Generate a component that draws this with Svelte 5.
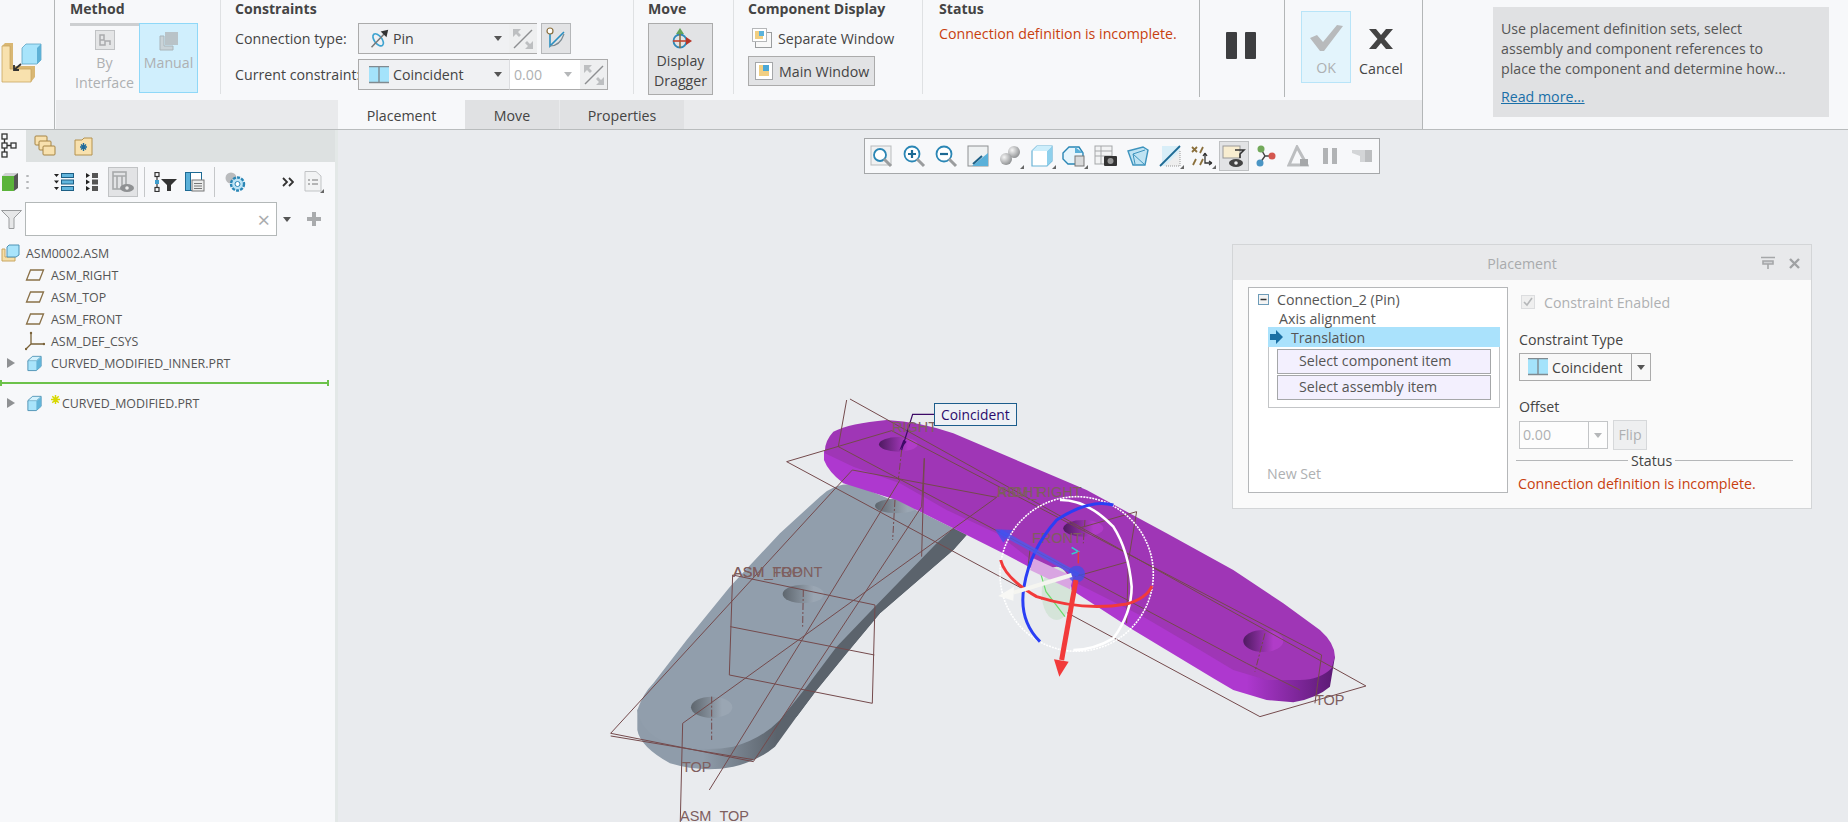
<script>
  const treeItems = [
    { label: 'ASM_RIGHT', kind: 'plane' },
    { label: 'ASM_TOP', kind: 'plane' },
    { label: 'ASM_FRONT', kind: 'plane' },
    { label: 'ASM_DEF_CSYS', kind: 'csys' }
  ];
</script>

{#snippet cube(size)}
  <svg width={size} height={size} viewBox="0 0 18 18">
    <path d="M2 6 L7 1.5 H16 V12 L11 16.5 H2 Z" fill="#a9e4fb" stroke="#4f93b5" stroke-width="1"/>
    <path d="M11 6.5 L16 2 V12 L11 16.5 Z" fill="#62b4d8"/>
    <path d="M2 6 L7 1.5 H16 L11 6 Z" fill="#d4f2fd" stroke="#4f93b5" stroke-width=".6"/>
  </svg>
{/snippet}

{#snippet scaleIcon()}
  <svg width="24" height="24" viewBox="0 0 24 24">
    <path d="M2 2 H10 L7 5 L10 8 L8 10 L5 7 L2 10 Z" fill="#bdbfc1"/>
    <path d="M22 22 H14 L17 19 L14 16 L16 14 L19 17 L22 14 Z" fill="#bdbfc1"/>
    <path d="M21 3 L3 21" stroke="#8d8f91" stroke-width="1.5"/>
  </svg>
{/snippet}

{#snippet coincidentIcon()}
  <svg width="20" height="18" viewBox="0 0 20 18">
    <rect x="0" y="1" width="20" height="15" fill="#a4e3fb"/>
    <path d="M0 0.5 H20 M0 16.5 H20 M10 1 V16" stroke="#808a90" stroke-width="1.4"/>
  </svg>
{/snippet}

<div class="page">
  <header class="ribbon">
    <div class="feature">
      <svg width="42" height="40" viewBox="0 0 42 40">
        <path d="M1 3 L4 0 H12 V23 H34 V34 L30 39 H1 Z" fill="#d9b773"/>
        <path d="M1 3 H9 V26 H30 V39 H1 Z" fill="#f8e1ae" stroke="#c9a661" stroke-width=".8"/>
        <path d="M21 5 L25 1 H40 V17 L36 21 H21 Z" fill="#a8e4fb" stroke="#5ea3c4" stroke-width=".8"/>
        <path d="M36 5 L40 1 V17 L36 21 Z" fill="#5eb1d6"/>
        <path d="M20 21 L13 27 M13 22 V27 H18" stroke="#333" stroke-width="1.8" fill="none"/>
      </svg>
    </div>
    <div class="ribbon-main">
      <div class="groups">
        <section class="group method">
          <h3>Method</h3>
          <div class="method-row">
            <div class="big by-interface">
              <svg width="20" height="20" viewBox="0 0 20 20">
                <rect x=".5" y=".5" width="19" height="19" fill="#e4e5e6" stroke="#c0c2c4"/>
                <path d="M5 5 H9 V10 H5 Z M5 10 V15 H10 V11 H15 V15" fill="none" stroke="#a9abad" stroke-width="1.5"/>
              </svg>
              <span>By</span><span>Interface</span>
            </div>
            <div class="big manual">
              <svg width="20" height="20" viewBox="0 0 20 20">
                <path d="M1 5 H5 V15 H14 V19 H1 Z" fill="#c9d3d8" stroke="#aab5ba"/>
                <rect x="6" y="1" width="13" height="13" fill="#b9c3c8"/>
              </svg>
              <span>Manual</span>
            </div>
          </div>
        </section>

        <section class="group constraints">
          <h3>Constraints</h3>
          <div class="c-row">
            <span class="c-label">Connection type:</span>
            <div class="combo">
              <svg width="20" height="22" viewBox="0 0 24 24">
                <ellipse cx="11" cy="13" rx="4.500" ry="8.500" transform="rotate(-38 11 13)" fill="none" stroke="#3ea3d0" stroke-width="2"/>
                <path d="M3 22 L19 5" stroke="#777" stroke-width="1.800"/>
                <path d="M23 1 L14 3 L21 10 Z" fill="#333"/>
              </svg>
              <span class="combo-text">Pin</span>
              <i class="caret"></i>
            </div>
            <div class="mini">{@render scaleIcon()}</div>
            <div class="mini pressed">
              <svg width="26" height="26" viewBox="0 0 26 26">
                <path d="M7 5 V20 L21 6" fill="none" stroke="#2b8fc0" stroke-width="1.6"/>
                <path d="M7 20 Q17 20 21 8" fill="none" stroke="#7b8a92" stroke-width="1.2"/>
                <circle cx="7" cy="5" r="3" fill="#fff" stroke="#8a6f3c" stroke-width="1.2"/>
              </svg>
            </div>
          </div>
          <div class="c-row second">
            <span class="c-label">Current constraint:</span>
            <div class="combo">
              {@render coincidentIcon()}
              <span class="combo-text">Coincident</span>
              <i class="caret"></i>
            </div>
            <div class="num-field">
              <span class="num">0.00</span>
              <i class="caret light"></i>
            </div>
            <div class="mini last">{@render scaleIcon()}</div>
          </div>
        </section>

        <section class="group move">
          <h3>Move</h3>
          <div class="dragger">
            <svg width="24" height="24" viewBox="0 0 24 24">
              <circle cx="11" cy="14" r="6.5" fill="none" stroke="#2f88b8" stroke-width="1.8"/>
              <path d="M11 5 V21" stroke="#8d6f43" stroke-width="1.6"/>
              <path d="M4 14 H18" stroke="#c2452f" stroke-width="1.6"/>
              <path d="M11 1 L7 7 H15 Z" fill="#63a35c"/>
              <path d="M23 14 L17 10 V18 Z" fill="#b5352a"/>
            </svg>
            <span>Display</span><span>Dragger</span>
          </div>
        </section>

        <section class="group component">
          <h3>Component Display</h3>
          <div class="cd-btn">
            <svg width="20" height="20" viewBox="0 0 20 20">
              <rect x="3.5" y="4.5" width="16" height="15" fill="#f8f8f8" stroke="#9a9c9e"/>
              <rect x=".5" y=".5" width="14" height="13" fill="#fff" stroke="#b5b7b9"/>
              <rect x="3" y="3" width="8" height="8" fill="#f1cf82"/>
              <rect x="7" y="3" width="5" height="5" fill="#5bb3dc"/>
            </svg>
            <span>Separate Window</span>
          </div>
          <div class="cd-btn active">
            <svg width="18" height="18" viewBox="0 0 18 18">
              <rect x=".5" y=".5" width="17" height="17" fill="#fff" stroke="#a5a7a9"/>
              <rect x="4" y="3" width="10" height="11" fill="#f1cf82"/>
              <rect x="8" y="3" width="6" height="6" fill="#4aa7d6"/>
            </svg>
            <span>Main Window</span>
          </div>
        </section>

        <section class="group status">
          <h3>Status</h3>
          <p class="error">Connection definition is incomplete.</p>
        </section>

        <section class="group pause">
          <i class="bar"></i><i class="bar"></i>
        </section>

        <section class="group actions">
          <div class="act ok">
            <svg width="34" height="28" viewBox="0 0 34 28">
              <path d="M1 14 L8 11 L14 18 L28 1 L34 2 L15 27 H11 Z" fill="#b8babc"/>
            </svg>
            <span>OK</span>
          </div>
          <div class="act cancel">
            <svg width="26" height="22" viewBox="0 0 26 22">
              <path d="M1 1 H8 L13 7 L18 1 H25 L16.5 11 L25 21 H18 L13 15 L8 21 H1 L9.5 11 Z" fill="#444"/>
            </svg>
            <span>Cancel</span>
          </div>
        </section>
      </div>
      <nav class="tabstrip">
        <span class="tab current">Placement</span>
        <span class="tab tab-move">Move</span>
        <span class="tab tab-props">Properties</span>
      </nav>
    </div>
    <aside class="help">
      <div class="help-box">
        <p>Use placement definition sets, select<br/>assembly and component references to<br/>place the component and determine how...</p>
        <a href="#more">Read more...</a>
      </div>
    </aside>
  </header>

  <div class="workspace">
    <aside class="sidebar">
      <div class="side-tabs">
        <div class="side-tab on">
          <svg width="16" height="26" viewBox="0 0 16 26">
            <g fill="none" stroke="#333" stroke-width="1.3">
              <rect x="1" y="1" width="5" height="5"/><rect x="1" y="10" width="5" height="5"/><rect x="1" y="19" width="5" height="5"/><rect x="10" y="10" width="5" height="5"/>
              <path d="M3.5 6 V10 M3.5 15 V19 M6 12.5 H10"/>
            </g>
          </svg>
        </div>
        <div class="side-tab">
          <svg width="22" height="22" viewBox="0 0 22 22">
            <g fill="#f8e1ae" stroke="#a58445" stroke-width="1">
              <rect x="1" y="1" width="12" height="9" rx="1"/><rect x="5" y="6" width="12" height="9" rx="1"/><rect x="9" y="11" width="12" height="9" rx="1"/>
            </g>
          </svg>
        </div>
        <div class="side-tab folder">
          <svg width="20" height="20" viewBox="0 0 20 20">
            <path d="M1 4 H8 L10 2 H18 V19 H1 Z" fill="#f8e1ae" stroke="#b4924f"/>
            <path d="M9.5 7 V15 M6 11 H13 M7 8.5 L12 13.5 M12 8.5 L7 13.5" stroke="#1f6a9a" stroke-width="1.4"/>
          </svg>
        </div>
      </div>

      <div class="side-tools">
        <svg width="16" height="18" viewBox="0 0 16 18">
          <rect y="3" width="12" height="15" fill="#5bb43a"/><path d="M0 3 L3 0 H16 L12 3 Z" fill="#d0d2d4"/><path d="M12 3 L16 0 V15 L12 18 Z" fill="#555"/>
        </svg>
        <i class="grip"></i>
        <svg width="20" height="18" viewBox="0 0 20 18">
          <g fill="#62b5dc" stroke="#1d5f85"><rect x="7.5" y=".5" width="12" height="4"/><rect x="7.5" y="7" width="12" height="4"/><rect x="7.5" y="13.5" width="12" height="4"/></g>
          <path d="M0 1 H5 L2.500 4 Z M0 7.500 H5 L2.500 10.500 Z M0 14 H5 L2.500 17 Z" fill="#222"/>
        </svg>
        <svg width="12" height="18" viewBox="0 0 12 18">
          <g fill="#555"><rect x="6" width="6" height="5"/><rect x="6" y="6.500" width="6" height="5"/><rect x="6" y="13" width="6" height="5"/></g>
          <path d="M0 0 L4 2.500 L0 5 Z M0 6.500 L4 9 L0 11.500 Z M0 13 L4 15.500 L0 18 Z" fill="#222"/>
        </svg>
        <div class="press">
          <svg width="22" height="22" viewBox="0 0 22 22">
            <g fill="none" stroke="#a7a9ab" stroke-width="1.6"><rect x="1" y="1" width="13" height="17"/><path d="M1 5 H14 M5 5 V18 M10 5 V18"/></g>
            <ellipse cx="15" cy="17" rx="7" ry="4" fill="#8f9193"/><circle cx="15" cy="17" r="1.800" fill="#eee"/>
          </svg>
        </div>
        <i class="vsep"></i>
        <svg width="24" height="20" viewBox="0 0 24 20">
          <g fill="none" stroke="#333" stroke-width="1.200"><rect x="1" y=".5" width="4" height="4"/><rect x="1" y="15.500" width="4" height="4"/><path d="M3 4.500 V8 M3 12 V15.500"/></g>
          <rect x="1" y="8" width="4" height="4" fill="#3f9ccb"/><path d="M7 7 H23 L17 13 V19 H13 V13 Z" fill="#333"/>
        </svg>
        <svg width="20" height="20" viewBox="0 0 20 20">
          <rect x=".5" y=".5" width="16" height="18" fill="#fff" stroke="#1d6a94"/><rect x=".5" y=".5" width="5" height="18" fill="#5ab0d9" stroke="#1d6a94"/>
          <rect x="7" y="8" width="12" height="11" fill="#eceded" stroke="#777"/><path d="M9 11.500 H17 M9 14 H17 M9 16.500 H17" stroke="#777"/>
        </svg>
        <i class="vsep"></i>
        <svg width="22" height="22" viewBox="0 0 22 22">
          <circle cx="7" cy="7" r="5.500" fill="#b9bbbd"/>
          <circle cx="13.500" cy="13" r="6.500" fill="#bde4f6" stroke="#2a86b5" stroke-width="2.400" stroke-dasharray="3 1.200"/>
          <circle cx="13.500" cy="13" r="2.500" fill="#fff" stroke="#2a86b5"/>
        </svg>
        <svg class="chev" width="12" height="10" viewBox="0 0 12 10"><path d="M1 1 L5 5 L1 9 M7 1 L11 5 L7 9" fill="none" stroke="#333" stroke-width="1.800"/></svg>
        <svg width="20" height="22" viewBox="0 0 20 22">
          <path d="M1 .5 H12 L17 5 V20 H1 Z" fill="#f2f3f4" stroke="#c1c3c5"/><path d="M4 9 H6 M8 9 H14 M4 13 H6 M8 13 H14" stroke="#777"/>
          <path d="M20 18 V22 H16 Z" fill="#666"/>
        </svg>
      </div>

      <div class="side-filter">
        <svg width="21" height="19" viewBox="0 0 21 19">
          <path d="M.5 .5 H20.500 L13 8 V18.500 H8 V8 Z" fill="#e6e7e8" stroke="#9a9c9e"/>
        </svg>
        <div class="filter-input"><span class="clear">×</span></div>
        <i class="caret filter-caret"></i>
        <span class="plus"></span>
      </div>

      <ul class="tree">
        <li class="root">
          <svg width="19" height="18" viewBox="0 0 19 18">
            <path d="M1 5 H4 V13 H14 V17 H1 Z" fill="#f6dfa9" stroke="#c9a661"/><path d="M6 3 L8 1 H18 V11 L15 13 H6 Z" fill="#a9e4fb" stroke="#4f93b5"/>
          </svg>
          <span>ASM0002.ASM</span>
        </li>
        {#each treeItems as item}
          <li class="feat">
            {#if item.kind === 'plane'}
              <svg width="19" height="12" viewBox="0 0 19 12">
                <path d="M5 1 H18 L14 11 H1 Z" fill="none" stroke="#8a7148" stroke-width="1.300"/>
              </svg>
            {:else}
              <svg width="20" height="20" viewBox="0 0 20 20">
                <path d="M6 2 V13 L1 18 M6 13 H19" fill="none" stroke="#7a6238" stroke-width="1.300"/>
                <circle cx="6" cy="2" r="1.200" fill="#7a6238"/><circle cx="19" cy="13" r="1.200" fill="#7a6238"/><circle cx="1" cy="18" r="1.200" fill="#7a6238"/>
              </svg>
            {/if}
            <span>{item.label}</span>
          </li>
        {/each}
        <li class="part">
          <i class="arrow"></i>
          {@render cube(17)}
          <span class="name">CURVED_MODIFIED_INNER.PRT</span>
        </li>
        <li class="insert"><i class="insert-line"></i></li>
        <li class="part">
          <i class="arrow"></i>
          {@render cube(17)}
          <svg class="star" width="9" height="9" viewBox="0 0 9 9">
            <path d="M4.500 0 V9 M0 4.500 H9 M1.300 1.300 L7.700 7.700 M7.700 1.300 L1.300 7.700" stroke="#d8d800" stroke-width="1.500"/>
          </svg>
          <span class="star-name">CURVED_MODIFIED.PRT</span>
        </li>
      </ul>
    </aside>

    <main class="viewport">
      <svg class="model" width="800" height="432" viewBox="0 0 800 432">
        <defs>
          <linearGradient id="purpleEnd" gradientUnits="userSpaceOnUse" x1="1880" y1="0" x2="2130" y2="0">
            <stop offset="0" stop-color="#ae38cf"/><stop offset="1" stop-color="#5f1b78"/>
          </linearGradient>
          <linearGradient id="greySide" gradientUnits="userSpaceOnUse" x1="250" y1="0" x2="470" y2="0">
            <stop offset="0" stop-color="#8f9caa"/><stop offset="1" stop-color="#5b636c"/>
          </linearGradient>
          <linearGradient id="holeP" x1="0" x2="1"><stop offset="0" stop-color="#4e1a60"/><stop offset=".75" stop-color="#b03cc8"/></linearGradient>
          <linearGradient id="holeG" x1="0" x2="1"><stop offset="0" stop-color="#5e666e"/><stop offset=".75" stop-color="#9aa6b3"/></linearGradient>
        </defs>

        <!-- traced at 3x, origin at page 620,400 -->
        <g transform="translate(40 10) scale(.3333)">
          <path d="M52 930 L52 990 Q60 1040 150 1090 Q250 1120 340 1100 Q410 1085 465 1040 L530 950 L590 870 L680 760 L780 640 L1000 450 L1040 405 L1000 385 Z" fill="url(#greySide)"/>
          <path d="M1000 385 L950 430 L770 615 L650 740 L560 860 L490 950 L530 950 L590 870 L680 760 L780 640 L1000 450 L1040 405 Z" fill="#5b636c"/>
          <path d="M52 930 Q70 880 100 850 L200 720 L330 560 L480 400 L600 290 Q640 250 700 252 L900 335 L1000 385 L950 430 L770 615 L650 740 L560 860 L480 960 Q420 1020 340 1040 Q240 1060 130 1025 Q60 990 52 930 Z" fill="#919eac"/>
          <ellipse cx="830" cy="318" rx="65" ry="22" fill="url(#holeG)"/>
          <ellipse cx="550" cy="582" rx="62" ry="28" fill="url(#holeG)"/>
          <ellipse cx="275" cy="922" rx="62" ry="32" fill="url(#holeG)"/>

          <path d="M612 150 L612 180 Q625 215 670 250 L830 300 L1000 385 L1160 465 L1340 560 L1540 690 L1780 835 L1840 870 L1940 900 L2020 907 Q2090 895 2130 860 L2145 770 L1600 500 L700 150 Z" fill="url(#purpleEnd)"/>
          <path d="M615 160 Q612 125 640 95 Q690 70 800 60 Q900 65 1000 100 L1400 270 L1640 400 L1840 510 L1990 610 L2100 690 Q2145 730 2145 770 L2135 805 Q2100 840 2040 840 L1940 840 L1840 810 L1740 750 L1570 650 L1370 550 L1240 485 L1130 400 L980 330 L840 250 L700 200 Z" fill="#9f36b6"/>
          <ellipse cx="835" cy="133" rx="58" ry="22" fill="url(#holeP)"/>
          <ellipse cx="1390" cy="385" rx="60" ry="25" fill="url(#holeP)"/>
          <ellipse cx="1930" cy="723" rx="60" ry="33" fill="url(#holeP)"/>

          <g class="datum">
            <path d="M690 -3 L2238 858 L1920 950 L500 185 L815 92 L2105 765 L2085 910"/>
            <path d="M680 0 L655 140 L1880 790 L2040 870"/>
            <path d="M697 210 L1130 292 L188 970 L180 1300"/>
            <path d="M697 210 L-28 1000 L400 1085 L905 320 L913 175 L905 470"/>
            <path d="M-28 1008 L400 1079 M268 1170 L540 730 L840 240"/>
            <path d="M338 525 L765 615 L757 910 L328 825 Z M331 680 L763 765"/>
            <path d="M1550 335 L1525 485 L1520 670 M1375 385 L1550 335 M1365 530 L1525 485"/>
            <path d="M1230 450 L1222 520"/>
          </g>
          <g class="axis">
            <path d="M845 150 L835 240 M825 300 L818 420 M550 570 L548 680 M275 890 V1020 M1935 700 L1905 815 M1395 360 L1390 430"/>
          </g>
          <path d="M943 43 H878 L845 150" fill="none" stroke="#3d0a66" stroke-width="1.200"/>
          <path d="M838 152 L850 120 L860 125 Z" fill="#3d0a66"/>
        </g>

        <text class="lbl" x="312" y="42">RIGHT</text>
        <text class="lbl" x="417" y="107">ASM_RIGHT</text>
        <text class="lbl" x="417" y="107">RIGHT</text>
        <text class="lbl" x="452" y="153">FRONT</text>
        <text class="lbl" x="153" y="187">ASM_FRONT</text>
        <text class="lbl" x="153" y="187">ASM_TOP</text>
        <text class="lbl" x="735" y="315">TOP</text>
        <text class="lbl" x="102" y="382">TOP</text>
        <text class="lbl" x="100" y="431">ASM_TOP</text>

        <g transform="translate(370 80) scale(.3333)">
          <ellipse cx="320" cy="370" rx="45" ry="80" fill="#d5e4d9" stroke="none"/>
          <path d="M272 310 L288 365 L345 440" fill="none" stroke="#6bdc6b" stroke-width="1.200"/>
          <path d="M250 265 L370 320 L360 358 L240 300 Z" fill="#d9a5e2"/>
          <ellipse cx="380" cy="312" rx="230" ry="232" fill="none" stroke="#fff" stroke-width="1.600" stroke-dasharray="2 1"/>
          <path d="M330 90 Q410 88 490 170 Q535 240 545 350 Q545 430 490 505 Q430 540 370 540" fill="none" stroke="#fff" stroke-width="2.600"/>
          <path d="M490 105 Q420 85 320 150 Q240 240 222 350 Q205 450 270 515" fill="none" stroke="#2a3ff5" stroke-width="3"/>
          <path d="M152 270 Q165 325 260 380 Q400 425 530 402 Q590 385 606 348" fill="none" stroke="#f23a3a" stroke-width="3"/>
          <path class="hatched" d="M385 315 L150 185" stroke="#4a5cf0" stroke-width="5"/>
          <path class="hatched" d="M135 178 L188 180 L160 218 Z" fill="#3d50f0"/>
          <circle class="hatched" cx="380" cy="312" r="25" fill="#3d50e8"/>
          <path d="M365 315 L190 368" stroke="#f5f5f0" stroke-width="4"/>
          <path d="M145 378 L192 350 L190 392 Z" fill="#f8f8f5"/>
          <path d="M378 330 L335 570" stroke="#f23a3a" stroke-width="5"/>
          <path d="M312 568 L356 575 L328 620 Z" fill="#f23a3a"/>
          <path d="M365 232 L385 245 L365 252" fill="none" stroke="#33cfd0" stroke-width="1.500"/>
          <path d="M385 245 L385 280" stroke="#e8393a" stroke-width="1.500"/>
        </g>

        <rect x="354.500" y="13.500" width="82" height="22" fill="#eef1f5" stroke="#1c5d8c"/>
        <text class="callout" x="361" y="30">Coincident</text>
      </svg>

      <div class="view-tools">
        <div class="vt"><svg width="24" height="24" viewBox="0 0 24 24"><rect x="1" y="2" width="20" height="19" fill="#f0f1f2" stroke="#b9bbbd"/><circle cx="10" cy="11" r="6" fill="#fff" stroke="#2a86b5" stroke-width="1.800"/><path d="M14 15 L21 22" stroke="#9a9c9e" stroke-width="3"/></svg></div>
        <div class="vt"><svg width="24" height="24" viewBox="0 0 24 24"><circle cx="10" cy="10" r="7.500" fill="#fff" stroke="#2a86b5" stroke-width="1.800"/><path d="M10 6 V14 M6 10 H14" stroke="#1d6a94" stroke-width="2.200"/><path d="M15 15 L22 22" stroke="#9a9c9e" stroke-width="3"/></svg></div>
        <div class="vt"><svg width="24" height="24" viewBox="0 0 24 24"><circle cx="10" cy="10" r="7.500" fill="#fff" stroke="#2a86b5" stroke-width="1.800"/><path d="M6 10 H14" stroke="#1d6a94" stroke-width="2.200"/><path d="M15 15 L22 22" stroke="#9a9c9e" stroke-width="3"/></svg></div>
        <div class="vt"><svg width="22" height="22" viewBox="0 0 22 22"><rect x="1" y="1" width="20" height="20" fill="#eef1f2" stroke="#8d8f91"/><path d="M21 8 L5 21 H21 Z" fill="#5ab0d9"/><path d="M6 19 L15 11" stroke="#1d5f85" stroke-width="2"/></svg></div>
        <div class="vt more"><svg width="22" height="22" viewBox="0 0 22 22"><defs><radialGradient id="ball" cx=".35" cy=".35" r=".7"><stop offset="0" stop-color="#f5f5f5"/><stop offset="1" stop-color="#8d8f91"/></radialGradient></defs><circle cx="15" cy="7" r="6" fill="url(#ball)"/><circle cx="7" cy="14" r="6" fill="url(#ball)"/></svg></div>
        <div class="vt more"><svg width="22" height="22" viewBox="0 0 22 22"><path d="M1 6 L6 1 H21 V16 L16 21 H1 Z" fill="#fff" stroke="#6ab3d6" stroke-width="1.200"/><path d="M16 6 L21 1 V16 L16 21 Z" fill="#8fd0ec"/><path d="M1 6 H16 L21 1 H6 Z" fill="#cdeefb"/></svg></div>
        <div class="vt more"><svg width="24" height="22" viewBox="0 0 24 22"><path d="M1 8 L7 2 H17 L21 8 V14 L16 19 H6 L1 14 Z" fill="#e6f5fc" stroke="#2a86b5" stroke-width="1.400"/><path d="M13 2 L21 8 H13 Z" fill="#5ab0d9"/><rect x="13" y="11" width="9" height="10" fill="#d9dadb" stroke="#777"/></svg></div>
        <div class="vt"><svg width="24" height="22" viewBox="0 0 24 22"><rect x="1" y="1" width="17" height="18" fill="#f2f3f4" stroke="#a5a7a9"/><path d="M1 6 H18 M1 11 H18 M7 1 V19" stroke="#a5a7a9"/><rect x="10" y="11" width="13" height="10" rx="1" fill="#333"/><circle cx="16.500" cy="16" r="3" fill="#999"/></svg></div>
        <div class="vt"><svg width="22" height="22" viewBox="0 0 22 22"><path d="M1 6 L16 2 L21 5 L18 20 L6 20 Z" fill="#bfe3f3" stroke="#3d93bd" stroke-width="1.400"/><path d="M6 9 L18 5 M6 9 L8 19 M6 9 L18 20" stroke="#3d93bd"/></svg></div>
        <div class="vt more"><svg width="22" height="22" viewBox="0 0 22 22"><rect x="3" y="1" width="18" height="20" fill="#d8eef8"/><path d="M21 6 V21 H6" fill="#eee" stroke="#999" stroke-dasharray="1 1"/><path d="M1 21 L21 1" stroke="#1d6a94" stroke-width="1.800"/></svg></div>
        <div class="vt more"><svg width="22" height="22" viewBox="0 0 22 22"><g stroke="#8a6f3c" stroke-width="1.800" fill="none"><path d="M1 2 L6 7 M6 2 L1 7 M12 2 L9 8 M2 20 L5 14 M9 20 L12 14"/></g><path d="M14 8 V18 H21 M14 8 L12 11 M14 8 L16 11 M21 18 L18 16 M21 18 L18 20" stroke="#333" stroke-width="1.300" fill="none"/></svg></div>
        <div class="vt on"><svg width="24" height="24" viewBox="0 0 24 24"><rect x="1" y="2" width="17" height="12" fill="#f8edd0" stroke="#999"/><path d="M13 6 H22 L18 10 V14" fill="none" stroke="#333" stroke-width="1.600"/><ellipse cx="14" cy="19" rx="7" ry="4" fill="#444"/><circle cx="14" cy="19" r="1.800" fill="#eee"/></svg></div>
        <div class="vt"><svg width="20" height="22" viewBox="0 0 20 22"><path d="M5 4 L9 11 L17 11 M9 11 L4 18" stroke="#444" stroke-width="1.400" fill="none"/><circle cx="5" cy="4" r="3.500" fill="#72a95a"/><circle cx="16" cy="11" r="3.500" fill="#d4574f"/><circle cx="4" cy="18" r="3.500" fill="#4a95c4"/></svg></div>
        <div class="vt"><svg width="22" height="22" viewBox="0 0 22 22"><path d="M10 2 L20 20 H2 Z" fill="none" stroke="#bcbec0" stroke-width="3"/><rect x="13" y="14" width="8" height="7" fill="#a5a7a9"/></svg></div>
        <div class="vt"><svg width="16" height="18" viewBox="0 0 16 18"><rect x="1" y="1" width="5" height="16" fill="#b1b3b5"/><rect x="10" y="1" width="5" height="16" fill="#b1b3b5"/></svg></div>
        <div class="vt"><svg width="22" height="16" viewBox="0 0 22 16"><path d="M1 2 H21 V14 H9 L9 8 L1 5 Z" fill="#d3d5d7"/><path d="M14 2 H21 V14 H14 Z" fill="#bcbec0"/></svg></div>
      </div>

      <div class="dialog">
        <div class="dlg-title">
          <span>Placement</span>
          <svg class="pin" width="16" height="14" viewBox="0 0 16 14"><path d="M1 1.500 H15 M3 5 H13 V8 H3 Z M8 8 V13" fill="#d0d2d4" stroke="#a5a7a9" stroke-width="1.600"/></svg>
          <svg class="close" width="11" height="11" viewBox="0 0 11 11"><path d="M1 1 L10 10 M10 1 L1 10" stroke="#a0a2a4" stroke-width="2.400"/></svg>
        </div>
        <div class="dlg-body">
          <div class="sets">
            <div class="set-head">
              <svg width="11" height="11" viewBox="0 0 11 11"><rect x=".5" y=".5" width="10" height="10" fill="#f4f4f4" stroke="#6d9bb8"/><path d="M2.500 5.500 H8.500" stroke="#333" stroke-width="1.500"/></svg>
              <span>Connection_2 (Pin)</span>
            </div>
            <div class="set-axis">Axis alignment</div>
            <div class="set-current">
              <svg width="13" height="14" viewBox="0 0 13 14"><path d="M0 4 H6 V0 L13 7 L6 14 V10 H0 Z" fill="#1a6fa3"/></svg>
              <span>Translation</span>
            </div>
            <div class="ref-box">
              <div class="ref">Select component item</div>
              <div class="ref">Select assembly item</div>
            </div>
            <div class="new-set">New Set</div>
          </div>
          <div class="props">
            <div class="check-row">
              <span class="check">
                <svg width="14" height="14" viewBox="0 0 14 14"><path d="M3 7 L6 10 L11 3" fill="none" stroke="#b5b7b9" stroke-width="1.600"/></svg>
              </span>
              <span>Constraint Enabled</span>
            </div>
            <div class="prop-label type-label">Constraint Type</div>
            <div class="type-combo">
              <div class="type-main">{@render coincidentIcon()}<span>Coincident</span></div>
              <div class="type-drop"><i class="caret"></i></div>
            </div>
            <div class="prop-label offset-label">Offset</div>
            <div class="offset-row">
              <div class="offset">
                <span class="offset-val">0.00</span>
                <div class="offset-drop"><i class="caret light"></i></div>
              </div>
              <div class="flip">Flip</div>
            </div>
            <div class="status-line"><i></i><span>Status</span><i></i></div>
            <div class="error dlg-error">Connection definition is incomplete.</div>
          </div>
        </div>
      </div>
    </main>
  </div>
</div>

<style>
  :global(body) {
    margin: 0;
    background: #e9ebee;
    font-family: "Open Sans", "Noto Sans", sans-serif;
    color: #444;
    overflow: hidden;
  }
  .page {
    width: 1848px;
    height: 822px;
    display: flex;
    flex-direction: column;
    overflow: hidden;
    font-size: 14.2px;
  }
  i { display: block; }
  h3 {
    margin: 0;
    height: 23px;
    font-size: 14.1px;
    line-height: 17px;
    font-weight: 700;
    color: #444;
  }

  /* ribbon */
  .ribbon {
    display: flex;
    height: 130px;
    flex: none;
    box-sizing: border-box;
    background: #f7f8fa;
    border-bottom: 1px solid #b9bcbd;
  }
  .feature {
    width: 55px;
    flex: none;
    box-sizing: border-box;
    border-right: 1px solid #b3b6b7;
    padding: 43px 0 0 1px;
  }
  .ribbon-main {
    width: 1368px;
    flex: none;
    display: flex;
    flex-direction: column;
    border-right: 1px solid #b3b6b7;
    box-sizing: border-box;
  }
  .groups {
    display: flex;
    height: 100px;
    padding-left: 1px;
  }
  .group {
    box-sizing: border-box;
    height: 94px;
    padding-left: 14px;
    border-right: 1px solid #dfe1e3;
    flex: none;
  }
  .method { width: 165px; }
  .method-row { display: flex; }
  .big {
    box-sizing: border-box;
    height: 70px;
    display: flex;
    flex-direction: column;
    align-items: center;
    color: #aeb0b2;
    line-height: 20px;
  }
  .by-interface {
    width: 69px;
    border-top: 3px solid #cdcfd1;
    padding-top: 4px;
  }
  .by-interface svg { margin-bottom: 3px; }
  .manual {
    width: 59px;
    background: #d0effd;
    border: 1px solid #8fd8f8;
    padding-top: 7px;
  }
  .manual svg { margin-bottom: 2px; }
  .constraints { width: 413px; }
  .c-row {
    display: flex;
    align-items: stretch;
    height: 31px;
  }
  .c-row.second { margin-top: 5px; }
  .c-label {
    width: 123px;
    flex: none;
    line-height: 31px;
    white-space: nowrap;
  }
  .combo {
    box-sizing: border-box;
    width: 151px;
    flex: none;
    display: flex;
    align-items: center;
    padding: 0 7px 0 10px;
    background: #f0f1f3;
    border: 1px solid #ababab;
    border-right: none;
    gap: 4px;
  }
  .combo-text { flex: 1; }
  .caret {
    width: 0;
    height: 0;
    border-left: 4px solid transparent;
    border-right: 4px solid transparent;
    border-top: 5px solid #555;
  }
  .caret.light { border-top-color: #b5b7b9; }
  .mini {
    box-sizing: border-box;
    width: 28px;
    flex: none;
    display: flex;
    align-items: center;
    justify-content: center;
    background: #eeeff0;
    border-top: 1px solid #ababab;
    border-bottom: 1px solid #ababab;
  }
  .mini.pressed {
    width: 30px;
    margin-left: 4px;
    background: #e2e3e5;
    border: 1px solid #b5b7b9;
  }
  .mini.last { border-right: 1px solid #ababab; }
  .num-field {
    box-sizing: border-box;
    width: 71px;
    flex: none;
    display: flex;
    align-items: center;
    background: #fff;
    border-top: 1px solid #ababab;
    border-bottom: 1px solid #ababab;
    border-left: 1px solid #dcdde0;
  }
  .num { width: 54px; padding-left: 4px; box-sizing: border-box; color: #aeb0b2; }
  .move { width: 100px; }
  .dragger {
    box-sizing: border-box;
    width: 65px;
    height: 72px;
    background: #e2e3e5;
    border: 1px solid #ababab;
    display: flex;
    flex-direction: column;
    align-items: center;
    padding-top: 3px;
    line-height: 20px;
  }
  .component { width: 189px; }
  .cd-btn {
    box-sizing: border-box;
    display: flex;
    align-items: center;
    gap: 6px;
    height: 30px;
    padding-left: 4px;
  }
  .cd-btn.active {
    width: 127px;
    margin-top: 3px;
    padding-left: 6px;
    background: #e2e3e5;
    border: 1px solid #ababab;
  }
  .status {
    width: 277px;
    padding-left: 16px;
    border-right-color: #b3b6b7;
    height: 97px;
  }
  .error {
    margin: 0;
    color: #c8400f;
    white-space: nowrap;
  }
  .status .error { line-height: 22px; }
  .pause {
    width: 85px;
    height: 97px;
    display: flex;
    gap: 8px;
    padding: 32px 0 0 26px;
    border-right-color: #b3b6b7;
  }
  .bar {
    width: 11px;
    height: 27px;
    background: #3d3e40;
    border-radius: 1px;
  }
  .actions {
    display: flex;
    padding: 11px 0 0 16px;
    border: none;
    gap: 5px;
  }
  .act {
    box-sizing: border-box;
    width: 50px;
    height: 72px;
    display: flex;
    flex-direction: column;
    align-items: center;
    justify-content: space-between;
    padding: 12px 0 5px;
  }
  .ok {
    background: #e3f4fc;
    border: 1px solid #b8e4f8;
    color: #aeb0b2;
  }
  .cancel { padding-top: 17px; }
  .tabstrip {
    display: flex;
    height: 29px;
    background: #e9eaec;
    padding-left: 282px;
    margin-left: 1px;
  }
  .tab {
    line-height: 32px;
    box-sizing: border-box;
    text-align: center;
    background: #e0e1e3;
    margin-right: 1px;
  }
  .tab.current { width: 127px; background: #f7f8fa; margin-right: 0; }
  .tab-move { width: 94px; }
  .tab-props { width: 124px; }
  .help {
    flex: 1;
    padding: 7px 0 0 70px;
    border-right: 3px solid transparent;
  }
  .help-box {
    box-sizing: border-box;
    width: 336px;
    height: 110px;
    background: #e0e1e3;
    padding: 12px 8px;
    line-height: 20px;
    color: #555;
  }
  .help-box p { margin: 0 0 8px; white-space: nowrap; }
  .help-box a { color: #1a6fa8; }

  /* model tree */
  .workspace {
    flex: 1;
    display: flex;
    min-height: 0;
  }
  .sidebar {
    box-sizing: border-box;
    width: 338px;
    flex: none;
    background: #f7f8fa;
    border-right: 3px solid #e3e8e7;
  }
  .side-tabs {
    display: flex;
    height: 32px;
    background: #dde1e1;
  }
  .side-tab {
    width: 46px;
    display: flex;
    align-items: center;
    padding-left: 8px;
    box-sizing: border-box;
  }
  .side-tab.on {
    width: 26px;
    background: #f7f8fa;
    padding-left: 1px;
  }
  .side-tab.folder { padding-left: 2px; }
  .side-tools {
    display: grid;
    grid-template-columns: 20px 32px 24px 32px 30px 12px 32px 26px 12px 30px 28px 20px 32px;
    justify-items: center;
    align-items: center;
    height: 40px;
  }
  .grip {
    justify-self: start;
    margin-left: 6px;
    width: 3px;
    height: 18px;
    background: radial-gradient(circle, #b5b7b9 1px, transparent 1.4px) 0 0 / 3px 6px;
  }
  .press {
    box-sizing: border-box;
    width: 30px;
    height: 30px;
    background: #e2e3e5;
    border: 1px solid #c1c3c5;
    display: flex;
    align-items: center;
    justify-content: center;
  }
  .vsep {
    width: 1px;
    height: 30px;
    background: #c5c7c9;
  }
  .chev { grid-column: 12; }
  .side-filter {
    display: flex;
    align-items: center;
    height: 34px;
    padding-left: 1px;
  }
  .filter-input {
    box-sizing: border-box;
    width: 252px;
    height: 34px;
    margin-left: 3px;
    background: #fff;
    border: 1px solid #b3b8b8;
    display: flex;
    align-items: center;
    justify-content: flex-end;
    padding-right: 6px;
  }
  .clear { font-size: 22px; color: #a9abad; line-height: 1; }
  .filter-caret { margin-left: 6px; }
  .plus {
    margin-left: 16px;
    width: 14px;
    height: 14px;
    background:
      linear-gradient(#a9abad, #a9abad) center / 14px 4px no-repeat,
      linear-gradient(#a9abad, #a9abad) center / 4px 14px no-repeat;
  }
  .tree {
    list-style: none;
    margin: 6px 0 0;
    padding: 0;
    font-size: 12.4px;
    color: #555;
  }
  .tree li {
    display: flex;
    align-items: center;
    height: 22px;
    white-space: nowrap;
  }
  .root { padding-left: 1px; gap: 6px; }
  .feat { padding-left: 25px; }
  .feat svg { width: 20px; margin-right: 6px; }
  .part { padding-left: 7px; }
  .arrow {
    width: 0;
    height: 0;
    border-top: 5px solid transparent;
    border-bottom: 5px solid transparent;
    border-left: 8px solid #8f9193;
    margin-right: 11px;
  }
  .name { margin-left: 8px; }
  .star { margin: -8px 0 0 8px; }
  .star-name { margin-left: 2px; }
  .tree li.insert { height: 18px; }
  .insert-line {
    width: 329px;
    height: 6px;
    background:
      linear-gradient(#6cc24a, #6cc24a) center / 100% 2px no-repeat,
      linear-gradient(#6cc24a, #6cc24a) left / 2px 6px no-repeat,
      linear-gradient(#6cc24a, #6cc24a) right / 2px 6px no-repeat;
  }

  /* canvas */
  .viewport {
    position: relative;
    flex: 1;
    background: #e9ebee;
    overflow: hidden;
  }
  .model {
    position: absolute;
    left: 242px;
    top: 260px;
    overflow: visible;
  }
  .model path, .model ellipse, .model circle {
    vector-effect: non-scaling-stroke;
  }
  .hatched { opacity: .75; }
  .datum path {
    fill: none;
    stroke: #744a4c;
    stroke-width: 1;
  }
  .axis path {
    fill: none;
    stroke: #744a4c;
    stroke-width: 1;
    stroke-dasharray: 7 2 2 2;
  }
  .lbl {
    font-family: "Liberation Sans", sans-serif;
    font-size: 14.5px;
    fill: #7e5e5e;
  }
  .callout {
    font-size: 13.8px;
    fill: #2a0a6b;
  }
  .view-tools {
    position: absolute;
    left: 526px;
    top: 8px;
    box-sizing: border-box;
    width: 516px;
    height: 36px;
    display: flex;
    align-items: center;
    gap: 4px;
    padding-left: 3px;
    background: #f7f8fa;
    border: 1px solid #a5a7a9;
  }
  .vt {
    position: relative;
    width: 28px;
    height: 28px;
    display: flex;
    align-items: center;
    justify-content: center;
  }
  .vt.on {
    background: #e2e3e5;
    box-shadow: 0 0 0 1px #bfc1c3;
  }
  .vt.more::after {
    content: "";
    position: absolute;
    right: 0;
    bottom: 1px;
    border-left: 4px solid transparent;
    border-bottom: 4px solid #666;
  }

  /* placement dialog */
  .dialog {
    position: absolute;
    left: 894px;
    top: 114px;
    box-sizing: border-box;
    width: 580px;
    height: 265px;
    background: #fafafa;
    border: 1px solid #d3d5d7;
  }
  .dlg-title {
    position: relative;
    height: 35px;
    background: #e8e9eb;
    line-height: 38px;
    text-align: center;
    color: #a9abad;
  }
  .pin {
    position: absolute;
    left: 527px;
    top: 11px;
  }
  .close {
    position: absolute;
    left: 556px;
    top: 13px;
  }
  .dlg-body {
    display: flex;
    padding: 7px 0 0 15px;
  }
  .sets {
    box-sizing: border-box;
    width: 260px;
    height: 206px;
    background: #fff;
    border: 1px solid #b5b7b9;
    padding-left: 9px;
    color: #555;
  }
  .set-head {
    display: flex;
    align-items: center;
    gap: 8px;
    height: 20px;
    margin-top: 1px;
  }
  .set-axis {
    height: 18px;
    line-height: 19px;
    padding-left: 21px;
  }
  .set-current {
    box-sizing: border-box;
    width: 232px;
    height: 20px;
    margin-left: 10px;
    display: flex;
    align-items: center;
    gap: 8px;
    padding-left: 2px;
    background: #aae2fc;
  }
  .ref-box {
    box-sizing: border-box;
    width: 232px;
    height: 61px;
    margin-left: 10px;
    padding: 2px 8px;
    border: 1px solid #c3c5c7;
    border-top: none;
  }
  .ref {
    box-sizing: border-box;
    height: 25px;
    line-height: 22px;
    padding-left: 21px;
    background: #f3f0fe;
    border: 1px solid #a5a7a9;
    margin-bottom: 1px;
  }
  .new-set {
    margin: 56px 0 0 9px;
    color: #aeb0b2;
  }
  .props {
    box-sizing: border-box;
    width: 290px;
    padding-left: 11px;
  }
  .check-row {
    display: flex;
    align-items: center;
    gap: 9px;
    color: #aeb0b2;
    height: 22px;
    margin-top: 4px;
    padding-left: 2px;
  }
  .check {
    box-sizing: border-box;
    width: 14px;
    height: 14px;
    background: #efefef;
    border: 1px solid #dcdddf;
    display: flex;
  }
  .check svg { margin: -1px; }
  .prop-label { line-height: 20px; }
  .type-label { margin-top: 17px; }
  .type-combo {
    box-sizing: border-box;
    width: 132px;
    height: 28px;
    margin-top: 3px;
    display: flex;
    border: 1px solid #ababab;
    background: #f8f8f8;
  }
  .type-main {
    flex: 1;
    display: flex;
    align-items: center;
    gap: 4px;
    padding-left: 8px;
    border-right: 1px solid #ababab;
  }
  .type-drop {
    width: 18px;
    display: flex;
    align-items: center;
    justify-content: center;
  }
  .offset-label { margin-top: 16px; }
  .offset-row {
    display: flex;
    align-items: center;
    gap: 5px;
    margin-top: 3px;
    height: 30px;
  }
  .offset {
    box-sizing: border-box;
    width: 89px;
    height: 28px;
    display: flex;
    border: 1px solid #c3c5c7;
    background: #fdfdfd;
  }
  .offset-val {
    flex: 1;
    padding-left: 3px;
    line-height: 26px;
    color: #aeb0b2;
  }
  .offset-drop {
    width: 18px;
    display: flex;
    align-items: center;
    justify-content: center;
    border-left: 1px solid #c3c5c7;
  }
  .flip {
    box-sizing: border-box;
    width: 34px;
    height: 30px;
    line-height: 28px;
    text-align: center;
    background: #eeeff0;
    border: 1px solid #d6d8da;
    color: #aeb0b2;
  }
  .status-line {
    display: flex;
    align-items: center;
    gap: 3px;
    width: 277px;
    margin: 0 0 0 -3px;
    height: 20px;
  }
  .status-line i {
    height: 1px;
    background: #b5b7b9;
    flex: 1;
  }
  .status-line i:first-child { flex: none; width: 112px; }
  .dlg-error {
    margin-top: 4px;
    line-height: 20px;
    margin-left: -1px;
  }
</style>
